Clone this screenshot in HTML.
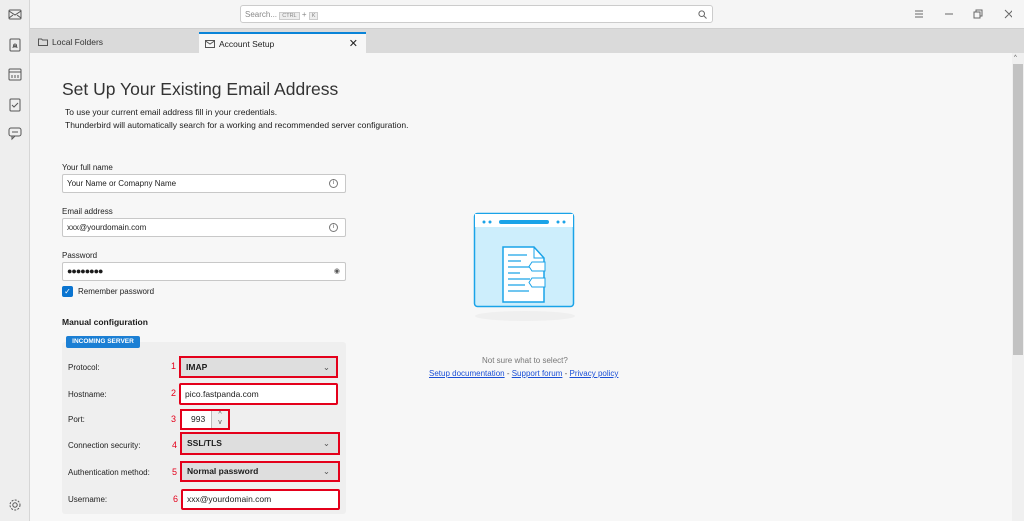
<!DOCTYPE html>
<html><head><meta charset="utf-8"><style>
*{box-sizing:border-box;margin:0;padding:0}
body{width:1024px;height:521px;overflow:hidden;background:#f7f7f7;font-family:"Liberation Sans",sans-serif;color:#1c1c1c;position:relative}
.abs{position:absolute}
.side{left:0;top:0;width:30px;height:521px;background:#eeeeee;border-right:1px solid #d6d6d6}
.top{left:30px;top:0;width:994px;height:29px;background:#f5f5f5;border-bottom:1px solid #cfcfcf}
.tabs{left:30px;top:29px;width:994px;height:24px;background:#dadada}
.lbl{font-size:8px;color:#222}
.inp{background:#fff;border:1px solid #c8c8c8;border-radius:2px;height:19px;font-size:8px;padding-left:4px;line-height:17px}
.red{border:2px solid #e4001b}
.sel{background:#dedede;font-weight:bold;font-size:8.5px;padding-left:5px}
.num{color:#e4001b;font-size:9px}
.info{width:9px;height:9px;border:1px solid #777;border-radius:50%;font-size:6px;text-align:center;line-height:7px;color:#555}
a{color:#1a4fd6;text-decoration:underline}
</style></head><body>
<div class="abs side"></div>
<svg class="abs" style="left:8px;top:9px" width="14" height="120" viewBox="0 0 14 120" fill="none" stroke="#555" stroke-width="1">
<rect x="1" y="1" width="12" height="9" rx="1"/><path d="M1 2l6 4 6-4M1 9l4-3M13 9l-4-3"/>
<rect x="2" y="30" width="10" height="12" rx="1"/><path d="M5 39c0-3 4-3 4 0M7 35a1.5 1.5 0 1 0 0.1 0"/>
<rect x="1" y="60" width="12" height="11" rx="1"/><path d="M1 63h12M4 66v3M7 66v3M10 66v3"/>
<rect x="2" y="90" width="10" height="12" rx="1"/><path d="M4 96l2 2 4-4"/>
</svg>
<svg class="abs" style="left:8px;top:127px" width="14" height="14" viewBox="0 0 14 14" fill="none" stroke="#555"><rect x="1" y="1" width="12" height="8" rx="2"/><path d="M4 9l0 3 3-3M4 5h6"/></svg>
<svg class="abs" style="left:8px;top:498px" width="14" height="14" viewBox="0 0 14 14" fill="none" stroke="#555"><circle cx="7" cy="7" r="2.2"/><circle cx="7" cy="7" r="5" stroke-dasharray="2 1.3"/></svg>
<div class="abs top"></div>
<div class="abs" style="left:240px;top:5px;width:473px;height:18px;background:#fff;border:1px solid #ccc;border-radius:3px;font-size:8px;color:#888;padding:4px 4px">Search... <span style="border:1px solid #ccc;background:#eee;font-size:5.5px;padding:0 2px">CTRL</span> + <span style="border:1px solid #ccc;background:#eee;font-size:5.5px;padding:0 2px">K</span>
<svg class="abs" style="right:5px;top:4px" width="9" height="9" viewBox="0 0 9 9" fill="none" stroke="#666"><circle cx="3.7" cy="3.7" r="2.8"/><path d="M5.8 5.8l2.7 2.7"/></svg></div>
<svg class="abs" style="left:912px;top:9px" width="100" height="11" viewBox="0 0 100 11" fill="none" stroke="#666"><path d="M3 2h8M3 5h8M3 8h8M33 5h8M62 3h6v6h-6zM64 3v-2h6v6h-2M93 1l8 8M101 1l-8 8"/></svg>
<div class="abs tabs"></div>
<div class="abs" style="left:38px;top:37px;font-size:8.5px;color:#333"><svg width="10" height="8" viewBox="0 0 10 8" fill="none" stroke="#555" style="vertical-align:-1px;margin-right:4px"><path d="M0.5 1h3l1 1h5v5.5h-9z"/></svg>Local Folders</div>
<div class="abs" style="left:199px;top:32px;width:167px;height:21px;background:#f7f7f7;border-top:2px solid #0a84d8;font-size:8.5px;padding:5px 6px;color:#222"><svg width="10" height="8" viewBox="0 0 10 8" fill="none" stroke="#555" style="vertical-align:-1px;margin-right:4px"><rect x="0.5" y="0.5" width="9" height="7"/><path d="M0.5 1l4.5 3 4.5-3"/></svg>Account Setup<span style="position:absolute;right:8px;top:3px;font-size:11px">✕</span></div>
<div class="abs" style="left:1012px;top:53px;width:12px;height:468px;background:#f0f0f0"></div>
<div class="abs" style="left:1013px;top:64px;width:10px;height:291px;background:#c2c2c2"></div>
<div class="abs" style="left:1014px;top:55px;font-size:6px;color:#555">^</div>

<div class="abs" style="left:62px;top:79px;font-size:17.5px;color:#333">Set Up Your Existing Email Address</div>
<div class="abs" style="left:65px;top:106px;font-size:8.5px;line-height:13px">To use your current email address fill in your credentials.<br>Thunderbird will automatically search for a working and recommended server configuration.</div>

<div class="abs lbl" style="left:62px;top:163px">Your full name</div>
<div class="abs inp" style="left:62px;top:174px;width:284px">Your Name or Comapny Name<div class="abs info" style="right:7px;top:4px">i</div></div>
<div class="abs lbl" style="left:62px;top:207px">Email address</div>
<div class="abs inp" style="left:62px;top:218px;width:284px">xxx@yourdomain.com<div class="abs info" style="right:7px;top:4px">i</div></div>
<div class="abs lbl" style="left:62px;top:251px">Password</div>
<div class="abs inp" style="left:62px;top:262px;width:284px;font-size:9px;letter-spacing:-1px">●●●●●●●●<span class="abs" style="right:6px;top:0;font-size:7px;color:#555">◉</span></div>
<div class="abs" style="left:62px;top:286px;width:11px;height:11px;background:#0a74d0;border-radius:2px;color:#fff;font-size:8px;text-align:center;line-height:11px">✓</div>
<div class="abs lbl" style="left:78px;top:287px">Remember password</div>

<div class="abs" style="left:62px;top:317px;font-size:8.5px;font-weight:bold">Manual configuration</div>
<div class="abs" style="left:62px;top:342px;width:284px;height:172px;background:#efefef;border-radius:3px"></div>
<div class="abs" style="left:66px;top:336px;width:74px;height:12px;background:#1b7fd4;color:#fff;font-size:6.5px;font-weight:bold;text-align:center;line-height:12px;border-radius:2px">INCOMING SERVER</div>

<div class="abs lbl" style="left:68px;top:363px">Protocol:</div>
<div class="abs lbl" style="left:68px;top:390px">Hostname:</div>
<div class="abs lbl" style="left:68px;top:415px">Port:</div>
<div class="abs lbl" style="left:68px;top:441px">Connection security:</div>
<div class="abs lbl" style="left:68px;top:468px">Authentication method:</div>
<div class="abs lbl" style="left:68px;top:495px">Username:</div>

<div class="abs num" style="left:171px;top:361px">1</div>
<div class="abs num" style="left:171px;top:388px">2</div>
<div class="abs num" style="left:171px;top:414px">3</div>
<div class="abs num" style="left:172px;top:440px">4</div>
<div class="abs num" style="left:172px;top:467px">5</div>
<div class="abs num" style="left:173px;top:494px">6</div>

<div class="abs red sel" style="left:179px;top:356px;width:159px;height:22px;line-height:18px">IMAP<span class="abs" style="right:6px;top:0;font-weight:normal;color:#555">⌄</span></div>
<div class="abs red inp" style="left:179px;top:383px;width:159px;height:22px;line-height:18px;font-size:8.5px">pico.fastpanda.com</div>
<div class="abs red" style="left:180px;top:409px;width:50px;height:21px;background:#fff;font-size:8.5px;line-height:17px;padding-left:9px">993<div class="abs" style="left:29px;top:0;width:17px;height:17px;border-left:1px solid #bbb;background:#eee;font-size:7px;line-height:8px;text-align:center;color:#555">^<br>v</div></div>
<div class="abs red sel" style="left:180px;top:432px;width:160px;height:23px;line-height:19px">SSL/TLS<span class="abs" style="right:8px;top:0;font-weight:normal;color:#555">⌄</span></div>
<div class="abs red sel" style="left:180px;top:461px;width:160px;height:21px;line-height:17px">Normal password<span class="abs" style="right:8px;top:0;font-weight:normal;color:#555">⌄</span></div>
<div class="abs red inp" style="left:181px;top:489px;width:159px;height:21px;line-height:17px;font-size:8.5px">xxx@yourdomain.com</div>

<svg class="abs" style="left:440px;top:200px" width="170" height="130" viewBox="440 200 170 130">
<ellipse cx="525" cy="316" rx="50" ry="5" fill="#efefef"/>
<rect x="474.5" y="213.5" width="99" height="93" rx="3" fill="#cdeefc" stroke="#1aa3e8" stroke-width="1.5"/>
<rect x="475" y="214" width="98" height="13" fill="#fff"/>
<circle cx="484" cy="222" r="1.5" fill="#1aa3e8"/><circle cx="490" cy="222" r="1.5" fill="#1aa3e8"/>
<circle cx="558" cy="222" r="1.5" fill="#1aa3e8"/><circle cx="564" cy="222" r="1.5" fill="#1aa3e8"/>
<rect x="499" y="220" width="50" height="4" rx="2" fill="#1aa3e8"/>
<path d="M503 247h31l10 11v44h-41z" fill="#fff" stroke="#1aa3e8" stroke-width="1.5"/>
<path d="M534 247v11h10" fill="none" stroke="#1aa3e8"/>
<path d="M508 255h19M508 261h13M508 267h24M508 273h12M508 279h22M508 285h17M508 291h21" stroke="#1aa3e8" stroke-width="1.3"/>
<path d="M532 262h13v9h-13l-3-4.5z M532 278h13v9h-13l-3-4.5z" fill="#fff" stroke="#1aa3e8"/>
</svg>
<div class="abs" style="left:482px;top:356px;font-size:8px;color:#777">Not sure what to select?</div>
<div class="abs" style="left:429px;top:369px;font-size:8px;color:#555"><a>Setup documentation</a> - <a>Support forum</a> - <a>Privacy policy</a></div>
</body></html>
